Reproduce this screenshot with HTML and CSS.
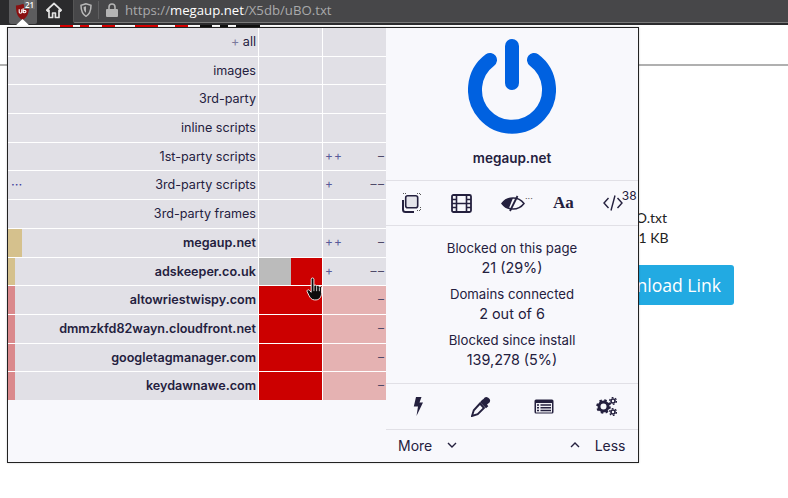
FILE: index.html
```html
<!DOCTYPE html>
<html lang="en">
<head>
<meta charset="utf-8">
<title>uBlock Origin popup</title>
<link rel="stylesheet" href="styles.css">
</head>
<body>
<header class="toolbar">
  <div class="tb-left">
    <div class="ext-btn">
      <svg class="ubo" viewBox="0 0 16 17"><path d="M1 1.500C4 1.500 6 1 8 0c2 1 4 1.500 7 1.500 0 7-1 12-7 15.500C2 13.500 1 8.500 1 1.500z" fill="#8a1011"/><path d="M4.500 5.500v3.300c0 1.300 2.700 1.300 2.700 0V5.500M8.700 4.500v5M8.700 8c0-1.700 3-1.700 3 0s-3 1.700-3 0z" fill="none" stroke="#fff" stroke-width="1.200"/></svg>
      <span class="badge">21</span>
    </div>
    <svg class="home" viewBox="0 0 16 16"><path d="M8 1 .8 7.600l1 1.100L3 7.700V15h3.600v-4.500h2.800V15H13V7.700l1.200 1 1-1.100z" fill="none" stroke="#e4e4e4" stroke-width="1.700" stroke-linejoin="round"/></svg>
  </div>
  <div class="urlbar">
    <svg class="shield" viewBox="0 0 12 14"><path d="M6 .8 1 2.300c0 5 .8 8.700 5 11 4.200-2.300 5-6 5-11z" fill="none" stroke="#b8b8b8" stroke-width="1.500"/><path d="M6 3.200 3.600 4c0 2.500.5 4.500 2.400 5.800z" fill="#b8b8b8"/></svg>
    <span class="sep"></span>
    <svg class="lock" viewBox="0 0 12 14"><path d="M3 6V4a3 3 0 0 1 6 0v2" fill="none" stroke="#b4b4b4" stroke-width="1.600"/><rect y="6" width="12" height="8" rx="1" fill="#b4b4b4"/></svg>
    <span class="url">https://<b class="host">megaup.net</b>/X5db/uBO.txt</span>
  </div>
</header>
<main class="page">
  <div class="strip"></div>
  <div class="site-head"></div>
  <section class="file">
    <p class="file-line">uBO.txt</p>
    <p class="file-line">2.01 KB</p>
    <a class="dl">Download Link</a>
  </section>
</main>

<div class="arrow"></div>

<div class="popup">
  <div class="firewall">
    <div class="label"><span class="lead">+</span>&nbsp;all</div><div class="c"></div><div class="c"></div>
    <div class="label">images</div><div class="c"></div><div class="c"></div>
    <div class="label">3rd-party</div><div class="c"></div><div class="c"></div>
    <div class="label">inline scripts</div><div class="c"></div><div class="c"></div>
    <div class="label">1st-party scripts</div><div class="c"></div><div class="c r"><span class="p">++</span><span class="m">–</span></div>
    <div class="label"><span class="dots">···</span>3rd-party scripts</div><div class="c"></div><div class="c r"><span class="p">+</span><span class="m">––</span></div>
    <div class="label">3rd-party frames</div><div class="c"></div><div class="c"></div>
    <div class="label dom"><i class="bar tan wide"></i>megaup.net</div><div class="c"></div><div class="c r"><span class="p">++</span><span class="m">–</span></div>
    <div class="label dom"><i class="bar tan"></i>adskeeper.co.uk</div><div class="c split"></div><div class="c r"><span class="p">+</span><span class="m">––</span></div>
    <div class="label dom"><i class="bar rose"></i>altowriestwispy.com</div><div class="c red"></div><div class="c r pink"><span></span><span class="m">–</span></div>
    <div class="label dom"><i class="bar rose"></i>dmmzkfd82wayn.cloudfront.net</div><div class="c red"></div><div class="c r pink"><span></span><span class="m">–</span></div>
    <div class="label dom"><i class="bar rose"></i>googletagmanager.com</div><div class="c red"></div><div class="c r pink"><span></span><span class="m">–</span></div>
    <div class="label dom"><i class="bar rose"></i>keydawnawe.com</div><div class="c red"></div><div class="c r pink"><span></span><span class="m">–</span></div>
  </div>

  <aside class="panel">
    <div class="head">
      <svg class="power" viewBox="0 0 88 96"><path d="M22 21a37 37 0 1 0 44 0" fill="none" stroke="#0061e0" stroke-width="14" stroke-linecap="round"/><path d="M44 7v37" fill="none" stroke="#0061e0" stroke-width="14" stroke-linecap="round"/></svg>
      <div class="site">megaup.net</div>
    </div>
    <div class="tools">
      <svg class="ic i-layers" viewBox="0 0 20 20"><rect x="4.700" y="2.700" width="12" height="12" rx="2" fill="#e4e4ea" stroke="#24203e" stroke-width="1.600"/><path d="M2 7v9.500A2.500 2.500 0 0 0 4.500 19H13" fill="none" stroke="#24203e" stroke-width="2"/><path d="M2 .5h3M16 .5h3.500M19.500 1v2M19.500 14v3M16 17.500h3.500" fill="none" stroke="#555" stroke-width="1" stroke-dasharray="1 1"/></svg>
      <svg class="ic i-film" viewBox="0 0 21 19"><rect x="1" y="1" width="19" height="17" rx="1.500" fill="none" stroke="#24203e" stroke-width="1.800"/><path d="M5.500 1v17M15.500 1v17M5.500 9.500h10M1 5.500h4.500M1 9.500h4.500M1 13.500h4.500M15.500 5.500H20M15.500 9.500H20M15.500 13.500H20" stroke="#24203e" stroke-width="1.600"/></svg>
      <span class="eye-wrap">
        <svg class="ic i-eye" viewBox="0 0 24 17"><path d="M1 8.500C4 4.500 8 3 12 3s8 1.500 11 5.500c-3 4-7 5.500-11 5.500S4 12.500 1 8.500z" fill="none" stroke="#24203e" stroke-width="1.500"/><path d="M1 8.500C4 4.500 8 3 12 3l-4 10C5 12.500 3 11 1 8.500z" fill="#24203e"/><path d="M16.500 1 9 16" stroke="#24203e" stroke-width="1.800"/></svg>
        <span class="mini">···</span>
      </span>
      <span class="aa">Aa</span>
      <span class="code-wrap">
        <svg class="ic i-code" viewBox="0 0 20 16"><path d="M5.500 3 1 8l4.500 5M14.500 3 19 8l-4.500 5M12 .5 8 15.500" fill="none" stroke="#24203e" stroke-width="1.400"/></svg>
        <sup class="count">38</sup>
      </span>
    </div>
    <div class="stats">
      <div class="stat"><div>Blocked on this page</div><div class="val">21 (29%)</div></div>
      <div class="stat"><div>Domains connected</div><div class="val">2 out of 6</div></div>
      <div class="stat"><div>Blocked since install</div><div class="val">139,278 (5%)</div></div>
    </div>
    <div class="actions">
      <svg class="ic i-bolt" viewBox="0 0 10 19"><path d="M3 0h5.500L6.500 5.500H10L3.500 19 5 9.500H.8z" fill="#24203e"/></svg>
      <svg class="ic i-drop" viewBox="0 0 20 20"><path d="M12.500 2a3.300 3.300 0 0 1 6 3.500L16 7.500l1.300 1.700-2.300 2-6-6 2-2.300z" fill="#24203e"/><path d="M9 6.500 2.800 13.300 1 19l5.700-1.800L13 11z" fill="none" stroke="#24203e" stroke-width="1.900"/></svg>
      <svg class="ic i-list" viewBox="0 0 20 15"><rect x=".5" y=".5" width="19" height="14" rx="1.500" fill="#24203e"/><rect x="2" y="4" width="16" height="9.500" fill="#f1f1f6"/><path d="M3 6h2M6.500 6H17M3 8.800h2M6.500 8.800H17M3 11.500h2M6.500 11.500H17" stroke="#24203e" stroke-width="1.500"/></svg>
      <svg class="ic i-gear" viewBox="0 0 21 19"><circle cx="7.500" cy="9.500" r="4.500" fill="none" stroke="#24203e" stroke-width="3"/><circle cx="7.500" cy="9.500" r="6.300" fill="none" stroke="#24203e" stroke-width="2" stroke-dasharray="2.500 2.450"/><circle cx="17" cy="4" r="2" fill="none" stroke="#24203e" stroke-width="1.600"/><circle cx="17" cy="4" r="3.400" fill="none" stroke="#24203e" stroke-width="1.300" stroke-dasharray="1.800 1.770"/><circle cx="17" cy="15" r="2" fill="none" stroke="#24203e" stroke-width="1.600"/><circle cx="17" cy="15" r="3.400" fill="none" stroke="#24203e" stroke-width="1.300" stroke-dasharray="1.800 1.770"/></svg>
    </div>
    <div class="moreless">
      <span class="more">More<svg class="chev" viewBox="0 0 10 6"><path d="M1 1l4 4 4-4" fill="none" stroke="#24203e" stroke-width="1.400"/></svg></span>
      <span class="less"><svg class="chev" viewBox="0 0 10 6"><path d="M1 5l4-4 4 4" fill="none" stroke="#24203e" stroke-width="1.400"/></svg>Less</span>
    </div>
  </aside>
</div>

<svg class="cursor" viewBox="0 0 16 22"><path d="M4.500 2c0-1.500 2.500-1.500 2.500 0v6c.5-1 2.300-.8 2.500.3.500-.9 2.200-.7 2.400.5.700-.6 2.100-.2 2.100 1V15c0 3-2 6-5 6H7.500C5 21 3.500 19 2.500 17L.8 13.500c-.6-1.500 1.200-2.500 2.200-1.200L4.500 14z" fill="#0c0c0c" stroke="#fff" stroke-width=".8"/><path d="M7 8v5M9.500 8.500v4.500M12 9.500V13" stroke="#fff" stroke-width=".7"/></svg>
</body>
</html>
```

FILE: styles.css
```css
* { box-sizing: border-box; }
html, body { margin: 0; height: 100%; overflow: hidden; }
body { background: #fff; font-family: Inter, "Liberation Sans", sans-serif; color: #24203e; width: 788px; height: 498px; position: relative; }

.toolbar { display: flex; height: 25px; background: #2b2b2d; }
.tb-left { width: 73px; display: flex; align-items: flex-start; }
.ext-btn { width: 28px; height: 24px; margin-left: 9px; background: #5c5c5e; position: relative; display: flex; justify-content: center; border-radius: 0 0 2px 2px; }
.ubo { width: 15px; height: 16px; margin-top: 4px; margin-right: 1px; }
.badge { position: absolute; left: 15px; top: 0; padding: 0 1px; height: 9px; font: 600 8px/9px "Open Sans", sans-serif; color: #fff; background: #6a6a6c; }
.home { width: 16px; height: 17px; margin: 2px 0 0 9px; }

.urlbar { flex: 1; height: 23px; display: flex; align-items: center; background: #474749; border-bottom: 1px solid #7a7a7a; border-left: 1px solid #555; border-radius: 0 0 0 2px; }
.shield { width: 12px; height: 14px; margin: -3px 0 0 6px; }
.sep { width: 1px; height: 18px; background: #5f5f61; margin: -3px 7px 0 6px; }
.lock { width: 12px; height: 14px; margin: -3px 7px 0 0; }
.url { font: 13.2px "Open Sans", sans-serif; color: #a9a9ab; margin-top: -3px; white-space: nowrap; }
.host { font-weight: 400; color: #fff; }

.strip { height: 2px; background: linear-gradient(90deg, #fff 60px, #d00 60px 73px, #fff 73px 80px, #d00 80px 89px, #fff 89px 102px, #d00 102px 115px, #fff 115px 135px, #d00 135px 158px, #fff 158px 175px, #d00 175px 188px, #fff 188px 200px, #111 200px 212px, #fff 212px 220px, #111 220px 228px, #fff 228px 236px, #111 236px 260px, #fff 260px); }
.site-head { height: 39px; border-bottom: 2px solid #b0b0b0; }
.file { display: flex; flex-direction: column; align-items: flex-start; padding: 142px 0 0 619px; }
.file-line { margin: 0; font: 14px/20px Lato, "Liberation Sans", sans-serif; color: #222; white-space: nowrap; }
.dl { margin: 17px 0 0 -29px; width: 144px; height: 40px; background: #22aae2; color: #fff; border-radius: 3px; font: 17.6px/40px "Open Sans", sans-serif; text-align: right; padding-right: 13px; white-space: nowrap; }

.arrow { position: absolute; left: 13px; top: 19px; width: 19px; height: 9px; background: #fff; clip-path: polygon(50% 0, 100% 100%, 0 100%); }

.popup { position: absolute; left: 7px; top: 27px; width: 632px; height: 436px; display: flex; align-items: flex-start; background: #f8f8fc; border: 1px solid #222; box-shadow: 0 0 2px rgba(0,0,0,.2); }

.firewall { width: 378px; display: grid; grid-template-columns: 250px 63px 63px; grid-auto-rows: 27.7px; gap: 1px; background: #fff; font-size: 12.6px; line-height: 28.7px; }
.label { background: #e1e0e6; display: flex; justify-content: flex-end; padding-right: 2px; white-space: nowrap; position: relative; }
.lead { color: #7a7a9c; }
.dots { position: absolute; left: 3px; top: -1px; color: #3d3d9a; font-size: 13px; }
.dom { font-weight: 600; }
.bar { flex: none; margin-right: auto; width: 7px; }
.bar.wide { width: 14px; }
.tan { background: #d5c18d; }
.rose { background: #da898c; }
.c { background: #e1e0e6; }
.r { display: flex; justify-content: space-between; padding: 0 2px; font-size: 12px; line-height: 26px; }
.p { color: #5a5a9a; letter-spacing: 1px; }
.m { color: #4e4a68; letter-spacing: 1.500px; margin-right: -1.500px; }
.red { background: #cc0000; }
.pink { background: #e5b2b2; }
.split { background: linear-gradient(90deg, #bbb 32px, #cc0000 32px); }

.panel { flex: 1; height: 434px; display: flex; flex-direction: column; }
.head { height: 153px; border-bottom: 1px solid #e1e0e6; display: flex; flex-direction: column; align-items: center; }
.power { width: 88px; height: 96px; margin-top: 11px; flex: none; }
.site { font-size: 13.5px; font-weight: 600; line-height: 16px; margin-top: 15px; }

.ic { display: block; flex: none; }
.tools { position: relative; height: 45px; border-bottom: 1px solid #e1e0e6; display: flex; align-items: center; padding: 0 0 0 15px; }
.i-layers { width: 20px; height: 20px; }
.i-film { width: 21px; height: 19px; margin-left: 30px; }
.eye-wrap { display: flex; margin-left: 29px; position: relative; }
.i-eye { width: 24px; height: 17px; }
.mini { font-size: 9px; line-height: 9px; color: #555; margin-top: -1px; width: 8px; }
.aa { font: 700 17px/20px "Liberation Serif", serif; margin-left: 20px; }
.code-wrap { display: flex; margin-left: 29px; position: relative; }
.i-code { width: 20px; height: 16px; }
.count { position: absolute; left: 19px; top: -6px; font-size: 12px; line-height: 14px; margin: 0; }

.stats { height: 158px; border-bottom: 1px solid #e1e0e6; padding-top: 13px; display: flex; flex-direction: column; gap: 7px; text-align: center; font-size: 13.2px; }
.stat { line-height: 19px; }
.val { font-size: 14.4px; line-height: 20px; }

.actions { height: 46px; border-bottom: 1px solid #e1e0e6; display: flex; align-items: center; padding-left: 27px; }
.i-bolt { width: 10px; height: 19px; }
.i-drop { width: 20px; height: 20px; margin-left: 48px; }
.i-list { width: 20px; height: 15px; margin-left: 43px; }
.i-gear { width: 21px; height: 19px; margin-left: 42px; }

.moreless { flex: 1; display: flex; justify-content: space-between; align-items: center; padding: 0 12.5px 2px 12px; font-size: 14px; }
.more, .less { display: flex; align-items: center; }
.chev { width: 10px; height: 6px; }
.more .chev { margin-left: 15px; }
.less .chev { margin-right: 15px; }

.cursor { position: absolute; left: 306px; top: 277px; width: 18px; height: 24px; }
```
